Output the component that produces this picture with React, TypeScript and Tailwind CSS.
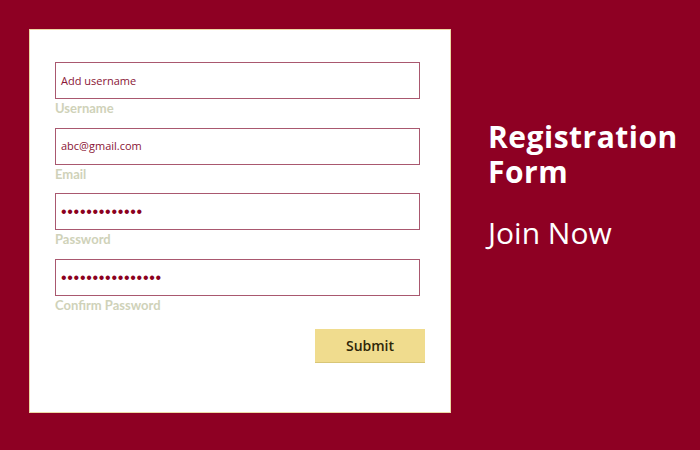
import React from 'react';

interface Field {
  label: string;
  value: string;
  secret?: boolean;
}

const fields: Field[] = [
  { label: 'Username', value: 'Add username' },
  { label: 'Email', value: 'abc@gmail.com' },
  { label: 'Password', value: '•••••••••••••', secret: true },
  { label: 'Confirm Password', value: '••••••••••••••••', secret: true },
];

const App: React.FC = () => {
  return (
    <div className="w-[700px] h-[450px] bg-[#8e0023] flex pl-[29px] pt-[29px] overflow-hidden">
      {/* Form card */}
      <div className="w-[422px] h-[384px] bg-white border border-[#ecd9a6] pl-[25px] pt-[32px] flex flex-col">
        {fields.map((field, index) => (
          <div key={index} className="flex flex-col mb-[10.5px]">
            <div className="w-[365px] h-[37px] border border-[#a9586f] flex items-center pl-[5px] pt-[1px]">
              {field.secret ? (
                <span
                  className="text-[#8b0020] text-[16px] tracking-[0.7px] leading-none"
                  style={{ fontFamily: '"Liberation Sans", Arial, sans-serif' }}
                >
                  {field.value}
                </span>
              ) : (
                <span
                  className="text-[#8a1535] text-[11px]"
                  style={{ fontFamily: '"Open Sans", sans-serif' }}
                >
                  {field.value}
                </span>
              )}
            </div>
            <label
              className="text-[13px] font-bold text-[#cfd2b9] leading-[18px]"
              style={{ fontFamily: 'Lato, sans-serif' }}
            >
              {field.label}
            </label>
          </div>
        ))}

        <div className="flex justify-end w-[370px] mt-[4.5px]">
          <button
            className="w-[110px] h-[34px] bg-[#f0dc8e] border-b border-[#d8c677] text-[14px] font-semibold text-[#2e2608]"
            style={{ fontFamily: '"Open Sans", sans-serif' }}
          >
            Submit
          </button>
        </div>
      </div>

      {/* Title */}
      <div className="flex flex-col pl-[37px] pt-[90px] text-white" style={{ fontFamily: '"Open Sans", sans-serif' }}>
        <h1 className="text-[30px] font-bold leading-[35px] tracking-[0.5px]">
          Registration
          <br />
          Form
        </h1>
        <p className="text-[30px] font-normal mt-[26px] leading-[36px]">Join Now</p>
      </div>
    </div>
  );
};

export default App;
